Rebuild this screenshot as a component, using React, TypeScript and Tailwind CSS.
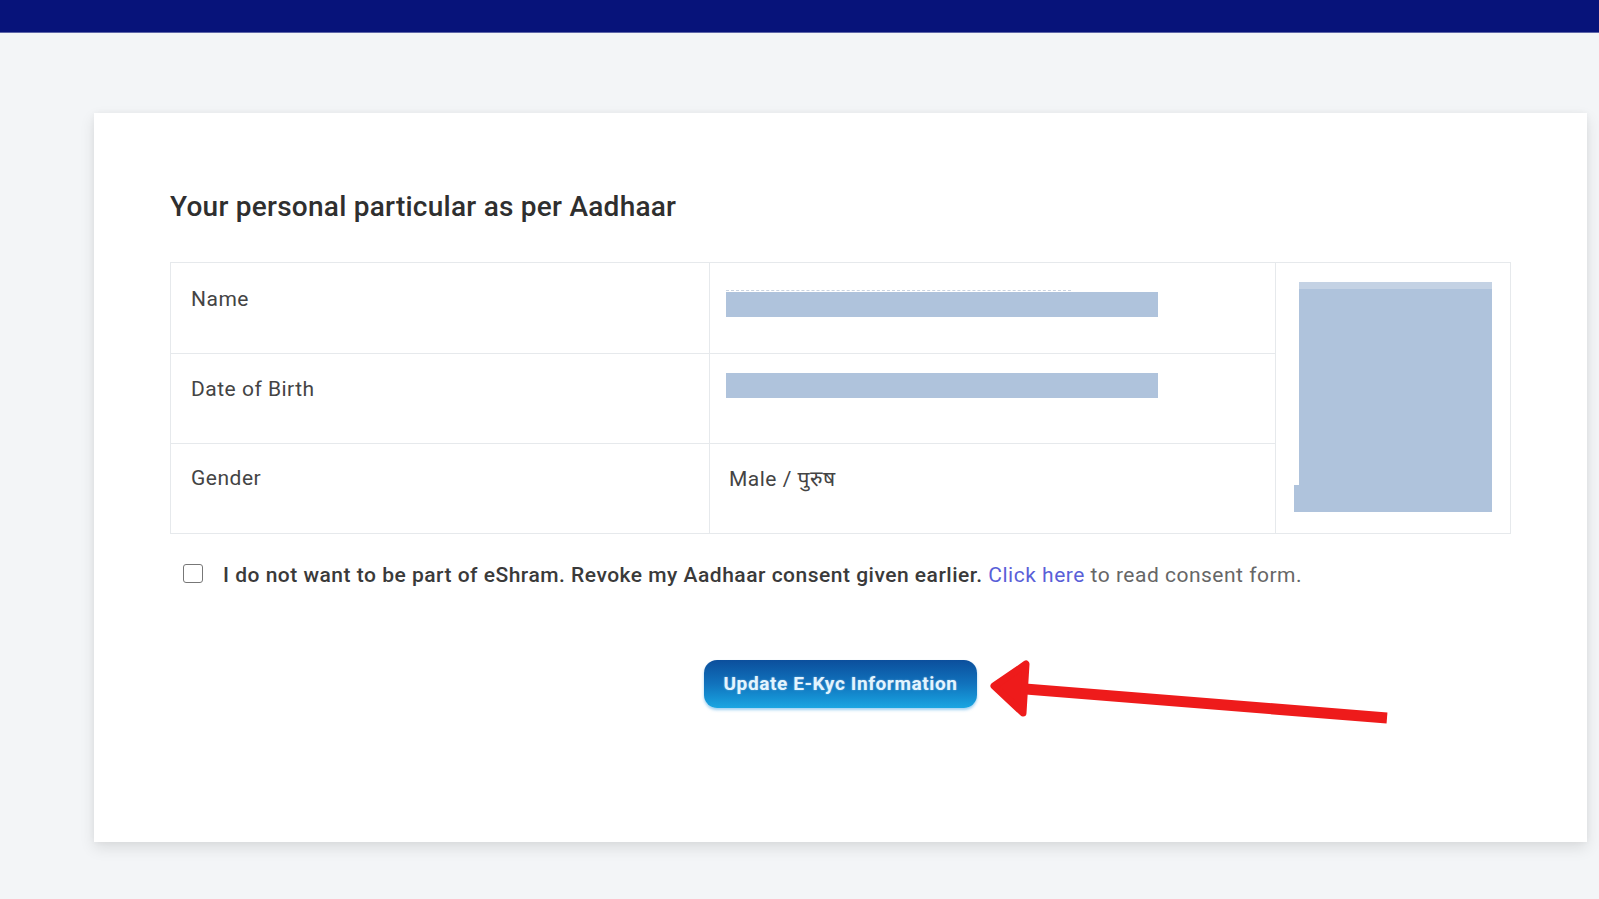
import React from "react";

export default function App() {
  return (
    <div
      className="relative min-h-[899px] w-full overflow-hidden bg-[#f3f5f7]"
      style={{ fontFamily: "Roboto, 'Noto Sans', 'Liberation Sans', sans-serif" }}
    >
      <div className="h-[33px] w-full bg-[#07137a] border-b border-[#5e66a8]" />
      <div className="pl-[94px] pr-[12px] pt-[80px]">
        <div className="h-[729px] w-[1493px] bg-white shadow-[0_6px_14px_rgba(0,0,0,0.10),0_0_6px_rgba(0,0,0,0.04)] px-[76px] pt-[78px]">
          <h2 className="text-[28px] leading-[32px] font-medium text-[#2f2f2f] tracking-[0.25px]">
            Your personal particular as per Aadhaar
          </h2>

          <div className="mt-[39px] grid grid-cols-[539px_566px_236px] grid-rows-[91px_90px_89px] border border-[#e6e9ec] text-[21px] leading-[24px] tracking-[0.5px] text-[#444]">
            <div className="border-r border-b border-[#e6e9ec] pl-[20px] pt-[24px]">
              Name
            </div>
            <div className="border-r border-b border-[#e6e9ec] pl-[16px] pt-[27px]">
              <div className="h-[1px] w-[345px] border-t border-dashed border-[#c9d3e0]" />
              <div className="mt-[1px] h-[25px] w-[432px] bg-[#afc3dc]" />
            </div>
            <div className="row-span-3 pl-[18px] pt-[19px]">
              <div className="h-[7px] w-[193px] ml-[5px] bg-[#c4d2e4]" />
              <div className="flex">
                <div className="w-[5px] flex flex-col">
                  <div className="h-[196px]" />
                  <div className="h-[27px] bg-[#afc3dc]" />
                </div>
                <div className="h-[223px] w-[193px] bg-[#afc3dc]" />
              </div>
            </div>

            <div className="border-r border-b border-[#e6e9ec] pl-[20px] pt-[23px]">
              Date of Birth
            </div>
            <div className="border-r border-b border-[#e6e9ec] pl-[16px] pt-[19px]">
              <div className="h-[25px] w-[432px] bg-[#afc3dc]" />
            </div>

            <div className="border-r border-[#e6e9ec] pl-[20px] pt-[22px]">
              Gender
            </div>
            <div className="border-r border-[#e6e9ec] pl-[19px] pt-[22px]">
              Male / <span style={{ fontFamily: "'Noto Sans', sans-serif" }}>पुरुष</span>
            </div>
          </div>

          <div className="mt-[30px] flex items-start pl-[13px]">
            <div className="h-[19px] w-[20px] shrink-0 rounded-[3px] border-[1.5px] border-[#777] bg-white" />
            <p className="ml-[20px] -mt-[1px] text-[21px] leading-[24px] tracking-[0.5px] text-[#666]">
              <span className="font-medium text-[#3a3a3a]">
                I do not want to be part of eShram. Revoke my Aadhaar consent given earlier.
              </span>{" "}
              <span className="text-[#5a5fd8]">Click here</span> to read consent form.
            </p>
          </div>

          <div className="mt-[73px] flex justify-center">
            <button className="h-[48px] w-[273px] rounded-[13px] bg-gradient-to-b from-[#0c4f9c] via-[#1173bd] to-[#1aa6e2] text-[19px] font-bold tracking-[0.6px] text-[#e3f4fe] shadow-[0_2px_3px_rgba(80,170,230,0.55)] [text-shadow:0_0_2px_rgba(255,255,255,0.4)]">
              Update E-Kyc Information
            </button>
          </div>
        </div>
      </div>

      <svg
        className="pointer-events-none absolute left-0 top-0"
        width="1599"
        height="899"
        viewBox="0 0 1599 899"
      >
        <line x1="1012" y1="688" x2="1387" y2="718" stroke="#ee1b1b" strokeWidth="11" />
        <polygon
          points="994,686 1026,664 1023,713"
          fill="#ee1b1b"
          stroke="#ee1b1b"
          strokeWidth="7"
          strokeLinejoin="round"
        />
      </svg>
    </div>
  );
}
